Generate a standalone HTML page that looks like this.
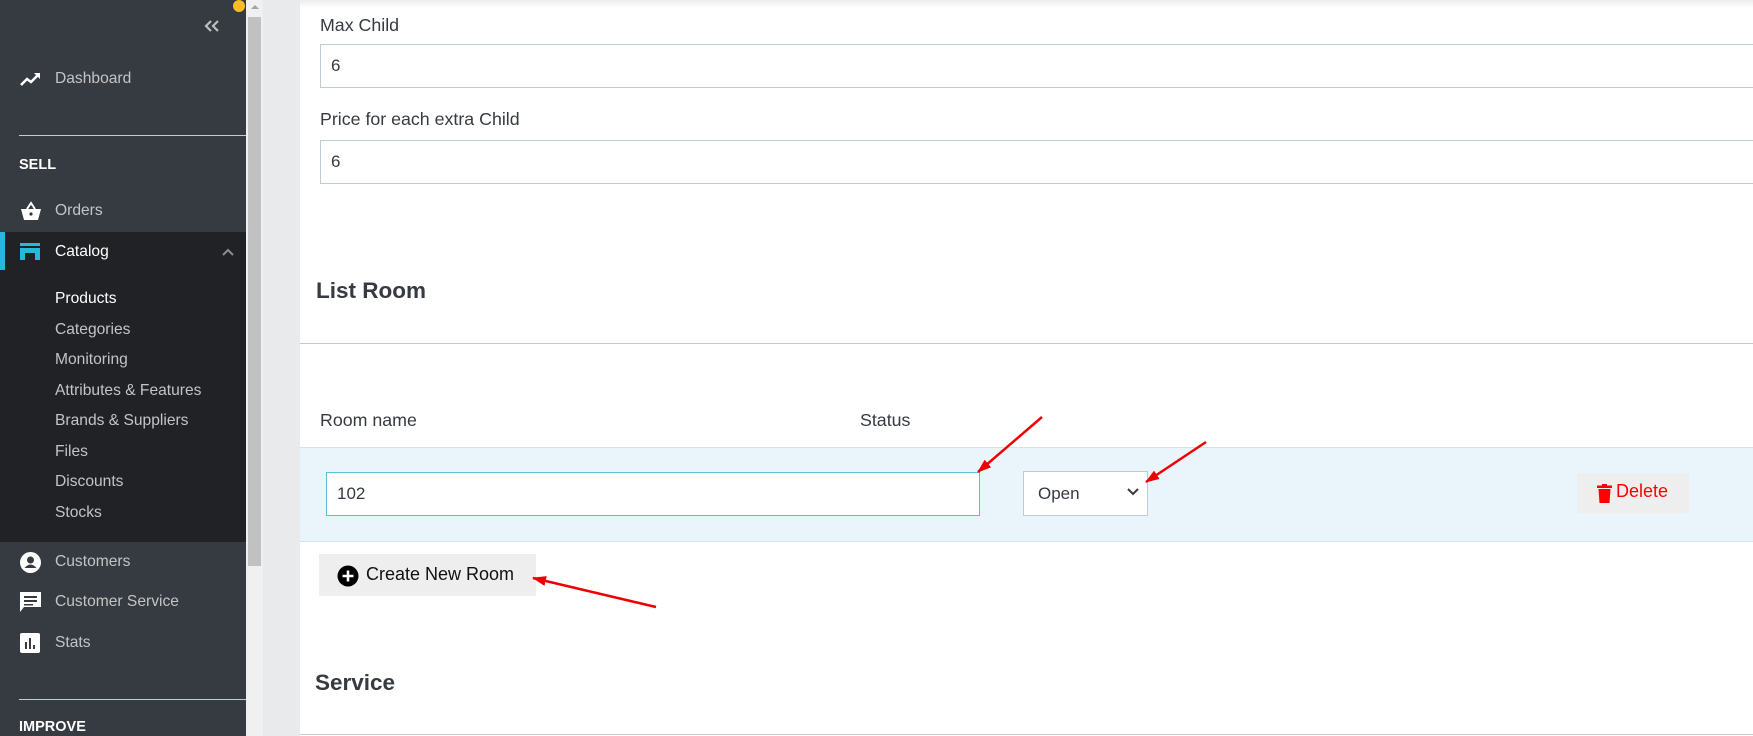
<!DOCTYPE html>
<html><head><meta charset="utf-8"><style>
*{margin:0;padding:0;box-sizing:border-box}
body{width:1753px;height:736px;overflow:hidden;position:relative;font-family:"Liberation Sans",sans-serif;background:#fff}
.a{position:absolute}
.sb{left:0;top:0;width:246px;height:736px;background:#363a41}
.cat{left:0;top:232px;width:246px;height:310px;background:#202226}
.nav{position:absolute;left:55px;font-size:15.6px;color:#c4c4c4;line-height:20px;transform:translateY(-10px)}
.sub{position:absolute;left:55px;font-size:15.6px;color:#c4c4c4;line-height:20px;transform:translateY(-10px)}
.hd{position:absolute;left:19px;font-size:14.5px;font-weight:bold;color:#fff;transform:translateY(-9px)}
.ic{position:absolute;left:20px}
.lbl{position:absolute;left:320px;font-size:17.8px;color:#363a41;transform:translateY(-11px)}
.inp{position:absolute;left:320px;width:1440px;height:44px;border:1px solid #bbcdd2;font-size:17px;color:#363a41;padding:11px 10px}
</style></head><body>
<div class="a sb"></div>
<div class="a cat"></div>
<div class="a" style="left:0;top:232px;width:5px;height:38px;background:#25b9d7"></div>
<svg class="a" style="left:204px;top:20px" width="16" height="12" viewBox="0 0 16 12"><path d="M7 1 L2 6 L7 11 M14 1 L9 6 L14 11" stroke="#bebebe" stroke-width="2.2" fill="none"/></svg>
<svg class="ic" style="top:71px" width="22" height="16" viewBox="0 0 22 16"><path d="M1 14 L7 8 L11 11 L19 3" stroke="#fff" stroke-width="2.5" fill="none"/><path d="M14 2 H20 V8 Z" fill="#fff"/></svg>
<div class="nav" style="top:79px">Dashboard</div>
<div class="a" style="left:19px;top:135px;width:227px;height:1px;background:#bbcdd2"></div>
<div class="hd" style="top:166px">SELL</div>
<svg class="ic" style="top:201px" width="22" height="20" viewBox="0 0 22 20"><path d="M7 8 L11 2 L15 8" stroke="#fff" stroke-width="2" fill="none"/><path d="M1 8 H21 L18 19 H4 Z" fill="#fff"/><circle cx="11" cy="13" r="1.6" fill="#363a41"/></svg>
<div class="nav" style="top:211px">Orders</div>
<svg class="ic" style="top:243px" width="20" height="18" viewBox="0 0 20 18"><rect x="0" y="0" width="20" height="3" fill="#25b9d7"/><rect x="0" y="5" width="20" height="12" fill="#25b9d7"/><rect x="5" y="10" width="10" height="7" fill="#202226"/></svg>
<div class="nav" style="top:252px;color:#fff">Catalog</div>
<svg class="a" style="left:222px;top:248px" width="12" height="8" viewBox="0 0 12 8"><path d="M1 7 L6 2 L11 7" stroke="#8a8d92" stroke-width="2" fill="none"/></svg>
<div class="sub" style="top:299px;color:#fff">Products</div>
<div class="sub" style="top:330px">Categories</div>
<div class="sub" style="top:360px">Monitoring</div>
<div class="sub" style="top:391px">Attributes &amp; Features</div>
<div class="sub" style="top:421px">Brands &amp; Suppliers</div>
<div class="sub" style="top:452px">Files</div>
<div class="sub" style="top:482px">Discounts</div>
<div class="sub" style="top:513px">Stocks</div>
<svg class="ic" style="top:552px" width="21" height="21" viewBox="0 0 21 21"><circle cx="10.5" cy="10.5" r="10.5" fill="#fff"/><circle cx="10.5" cy="8" r="3.5" fill="#363a41"/><path d="M4.5 16 Q10.5 9 16.5 16 Z" fill="#363a41"/></svg>
<div class="nav" style="top:562px">Customers</div>
<svg class="ic" style="top:592px" width="21" height="21" viewBox="0 0 21 21"><path d="M0 0 H21 V15 H4 L0 20 Z" fill="#fff"/><rect x="4" y="4" width="13" height="2" fill="#363a41"/><rect x="4" y="8" width="13" height="2" fill="#363a41"/><rect x="4" y="12" width="9" height="1.5" fill="#363a41"/></svg>
<div class="nav" style="top:602px">Customer Service</div>
<svg class="ic" style="top:633px" width="20" height="20" viewBox="0 0 20 20"><rect width="20" height="20" rx="2" fill="#fff"/><rect x="5" y="9" width="2" height="7" fill="#363a41"/><rect x="9" y="5" width="2" height="11" fill="#363a41"/><rect x="13" y="12" width="2" height="4" fill="#363a41"/></svg>
<div class="nav" style="top:643px">Stats</div>
<div class="a" style="left:19px;top:699px;width:227px;height:1px;background:#bbcdd2"></div>
<div class="hd" style="top:728px">IMPROVE</div>
<div class="a" style="left:246px;top:0;width:17px;height:736px;background:#f0f0f0"></div>
<div class="a" style="left:248px;top:17px;width:13px;height:549px;background:#c1c1c1"></div>
<div class="a" style="left:251px;top:5px;width:0;height:0;border-left:4px solid transparent;border-right:4px solid transparent;border-bottom:4px solid #a3a3a3"></div>
<div class="a" style="left:263px;top:0;width:37px;height:736px;background:#e9eaeb"></div>
<div class="a" style="left:233px;top:0;width:12px;height:12px;border-radius:50%;background:#fbbb22"></div>
<div class="a" style="left:300px;top:0;width:1453px;height:8px;background:linear-gradient(#ececec,#fff)"></div>
<div class="lbl" style="top:26px">Max Child</div>
<div class="inp" style="top:44px">6</div>
<div class="lbl" style="top:120px">Price for each extra Child</div>
<div class="inp" style="top:140px">6</div>
<div class="a" style="left:316px;top:278px;font-size:22.5px;font-weight:bold;color:#363a41">List Room</div>
<div class="a" style="left:300px;top:343px;width:1453px;height:1px;background:#bbcdd2"></div>
<div class="lbl" style="top:421px">Room name</div>
<div class="lbl" style="top:421px;left:860px">Status</div>
<div class="a" style="left:300px;top:447px;width:1453px;height:95px;background:#eaf4fb;border-top:1px solid #d6e2ea;border-bottom:1px solid #d6e2ea"></div>
<div class="a" style="left:326px;top:472px;width:654px;height:44px;background:#fff;border:1px solid #5bc0d3;font-size:17px;color:#363a41;padding:11px 10px">102</div>
<div class="a" style="left:1023px;top:471px;width:125px;height:45px;background:#fff;border:1px solid #bbcdd2;font-size:17px;color:#363a41;padding:12px 14px">Open</div>
<svg class="a" style="left:1127px;top:488px" width="12" height="8" viewBox="0 0 12 8"><path d="M1 1 L6 6 L11 1" stroke="#363a41" stroke-width="2" fill="none"/></svg>
<div class="a" style="left:1577px;top:473px;width:112px;height:40px;background:#eeeeee"></div>
<svg class="a" style="left:1597px;top:484px" width="15" height="19" viewBox="0 0 15 19"><rect x="0" y="1.5" width="15" height="2.5" fill="#f00"/><rect x="5" y="0" width="5" height="2" fill="#f00"/><path d="M1.5 5 H13.5 L12.5 19 H2.5 Z" fill="#f00"/></svg>
<div class="a" style="left:1616px;top:481px;font-size:18px;color:#f00">Delete</div>
<div class="a" style="left:319px;top:554px;width:217px;height:42px;background:#eeeeee"></div>
<svg class="a" style="left:337px;top:565px" width="22" height="22" viewBox="0 0 22 22"><circle cx="11" cy="11" r="10.5" fill="#000"/><path d="M11 5.5 V16.5 M5.5 11 H16.5" stroke="#fff" stroke-width="2.6"/></svg>
<div class="a" style="left:366px;top:564px;font-size:18px;color:#111">Create New Room</div>
<div class="a" style="left:315px;top:670px;font-size:22.5px;font-weight:bold;color:#363a41">Service</div>
<div class="a" style="left:300px;top:734px;width:1453px;height:1px;background:#bbcdd2"></div>
<svg class="a" style="left:0;top:0" width="1753" height="736">
<defs><marker id="m" markerWidth="14" markerHeight="10" refX="13" refY="5" orient="auto" markerUnits="userSpaceOnUse"><path d="M0 0 L14 5 L0 10 Z" fill="#e00"/></marker></defs>
<line x1="1042" y1="417" x2="978" y2="472" stroke="#e00" stroke-width="2.5" marker-end="url(#m)"/>
<line x1="1206" y1="442" x2="1146" y2="482" stroke="#e00" stroke-width="2.5" marker-end="url(#m)"/>
<line x1="656" y1="607" x2="533" y2="578" stroke="#e00" stroke-width="2.5" marker-end="url(#m)"/>
</svg>
</body></html>
